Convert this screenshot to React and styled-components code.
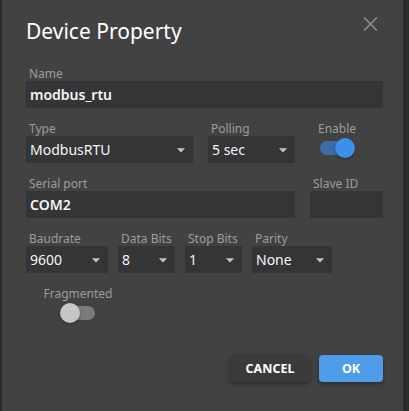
import React from 'react';
import styled, { createGlobalStyle } from 'styled-components';

const GlobalStyle = createGlobalStyle`
  html, body {
    margin: 0;
    padding: 0;
    background: #2b2b2b;
  }
  * {
    box-sizing: border-box;
  }
`;

const Dialog = styled.div`
  margin-left: 2px;
  width: 401px;
  height: 411px;
  background: #424242;
  padding: 18px 20px 0 24px;
  font-family: "Noto Sans", "Open Sans", sans-serif;
  color: #f2f2f2;
`;

const Header = styled.div`
  display: flex;
  justify-content: space-between;
  align-items: flex-start;
`;

const Title = styled.h2`
  margin: 0;
  font-size: 21px;
  line-height: 26px;
  font-weight: 400;
  color: #ffffff;
`;

const CloseButton = styled.button`
  background: none;
  border: none;
  padding: 0;
  margin: -1px 5px 0 0;
  width: 15px;
  height: 14px;
  cursor: pointer;
  display: flex;
`;

const Form = styled.div`
  display: flex;
  flex-direction: column;
  gap: 13px;
  margin-top: 22px;
`;

const Row = styled.div`
  display: flex;
  align-items: flex-start;
  gap: ${p => p.$gap || 15}px;
`;

const Field = styled.div`
  display: flex;
  flex-direction: column;
  width: ${p => (p.$width ? `${p.$width}px` : '100%')};
`;

const Label = styled.label`
  font-size: 12px;
  line-height: 15px;
  height: 15px;
  color: #9c9c9c;
  padding-left: 3px;
  white-space: nowrap;
`;

const Input = styled.div`
  height: 27px;
  background: #353538;
  padding: 0 4px;
  display: flex;
  align-items: center;
  font-size: 14px;
  font-weight: 600;
  color: #f4f4f4;
`;

const SelectBox = styled(Input)`
  justify-content: space-between;
  font-weight: 400;
  padding-right: 2px;
`;

const ToggleColumn = styled.div`
  display: flex;
  flex-direction: column;
  align-items: center;
  width: ${p => p.$width}px;
  margin-left: ${p => p.$offset}px;
`;

const ToggleLabel = styled(Label)`
  padding-left: 0;
`;

const Switch = styled.div`
  position: relative;
  width: 36px;
  height: 20px;
  margin-top: 2px;
`;

const Track = styled.div`
  position: absolute;
  left: 1px;
  top: 3px;
  width: 34px;
  height: 14px;
  border-radius: 7px;
  background: ${p => (p.$on ? '#3b6ca5' : '#7a7a7a')};
`;

const Thumb = styled.div`
  position: absolute;
  top: 0;
  left: ${p => (p.$on ? '16px' : '0')};
  width: 20px;
  height: 20px;
  border-radius: 50%;
  background: ${p => (p.$on ? '#3d8fee' : '#c6c6c6')};
  box-shadow: 0 1px 3px rgba(0, 0, 0, 0.35);
`;

const Actions = styled.div`
  display: flex;
  justify-content: flex-end;
  gap: 9px;
  margin-top: 32px;
`;

const Button = styled.button`
  height: 27px;
  width: ${p => p.$width}px;
  border: none;
  border-radius: 4px;
  font-family: "Noto Sans", "Open Sans", sans-serif;
  font-size: 12.5px;
  font-weight: 700;
  color: #ffffff;
  background: ${p => (p.$primary ? '#4e9cea' : '#3b3b3b')};
  box-shadow: 0 2px 4px rgba(0, 0, 0, 0.35);
  cursor: pointer;
`;

const CloseIcon = () => (
  <svg width="15" height="14" viewBox="0 0 15 14">
    <path d="M1 0.5 L14 13.5 M14 0.5 L1 13.5" stroke="#8d8d8d" strokeWidth="1.6" fill="none" />
  </svg>
);

const ArrowDown = () => (
  <svg width="20" height="20" viewBox="0 0 24 24">
    <path d="M7 10l5 5 5-5z" fill="#c4c4c4" />
  </svg>
);

const TextField = ({ label, value, width }) => (
  <Field $width={width}>
    <Label>{label}</Label>
    <Input>{value}</Input>
  </Field>
);

const SelectField = ({ label, value, width }) => (
  <Field $width={width}>
    <Label>{label}</Label>
    <SelectBox>
      <span>{value}</span>
      <ArrowDown />
    </SelectBox>
  </Field>
);

const Toggle = ({ label, on, width, offset }) => (
  <ToggleColumn $width={width} $offset={offset}>
    <ToggleLabel>{label}</ToggleLabel>
    <Switch>
      <Track $on={on} />
      <Thumb $on={on} />
    </Switch>
  </ToggleColumn>
);

export default function App() {
  return (
    <>
      <GlobalStyle />
      <Dialog>
        <Header>
          <Title>Device Property</Title>
          <CloseButton aria-label="close">
            <CloseIcon />
          </CloseButton>
        </Header>

        <Form>
          <Row>
            <TextField label="Name" value="modbus_rtu" />
          </Row>

          <Row>
            <SelectField label="Type" value="ModbusRTU" width={167} />
            <SelectField label="Polling" value="5 sec" width={87} />
            <Toggle label="Enable" on width={40} offset={7} />
          </Row>

          <Row>
            <TextField label="Serial port" value="COM2" width={269} />
            <TextField label="Slave ID" value="" width={73} />
          </Row>

          <Row $gap={10}>
            <SelectField label="Baudrate" value="9600" width={82} />
            <SelectField label="Data Bits" value="8" width={57} />
            <SelectField label="Stop Bits" value="1" width={57} />
            <SelectField label="Parity" value="None" width={80} />
          </Row>

          <Row>
            <Toggle label="Fragmented" on={false} width={64} offset={20} />
          </Row>
        </Form>

        <Actions>
          <Button $width={80}>CANCEL</Button>
          <Button $width={64} $primary>OK</Button>
        </Actions>
      </Dialog>
    </>
  );
}
